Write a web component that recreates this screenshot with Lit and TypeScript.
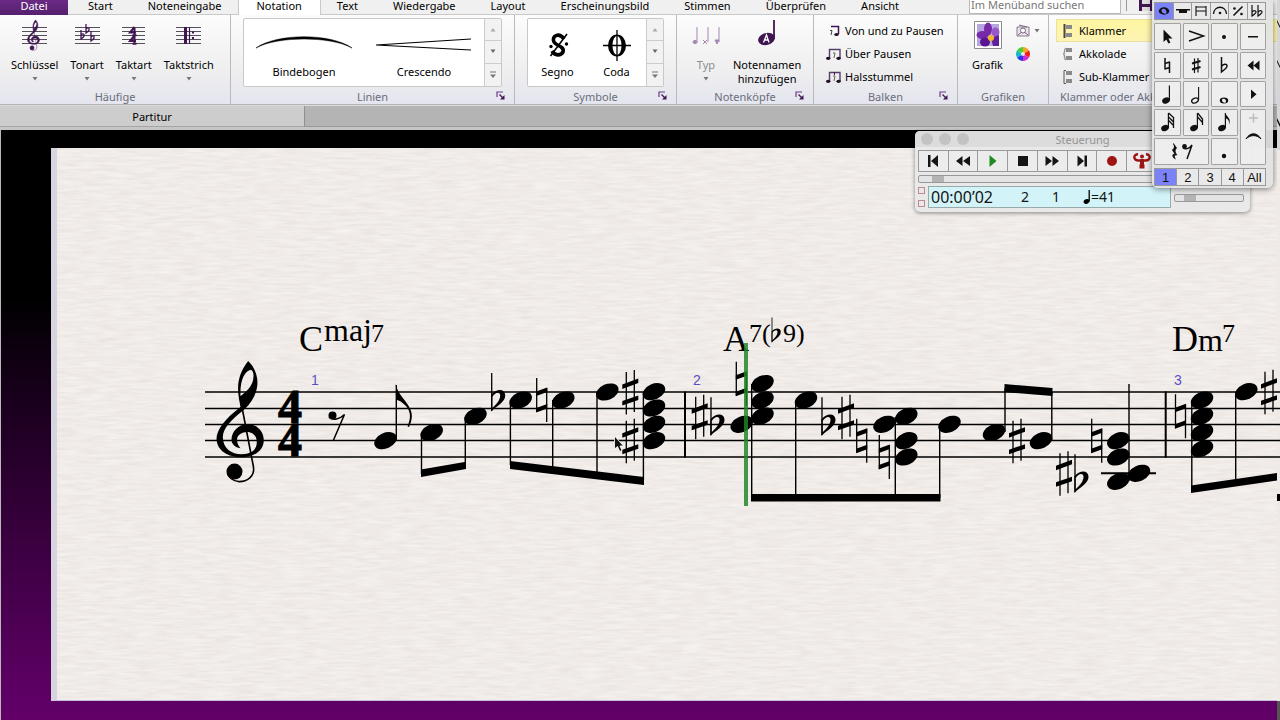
import { LitElement, html, svg, css, TemplateResult } from "lit";
import { customElement, state } from "lit/decorators.js";
import { classMap } from "lit/directives/class-map.js";

const staffLines = (w: number, ys: number[]) =>
  ys.map((y) => svg`<path d="M0 ${y}H${w}" stroke="#55505c" stroke-width="1"/>`);

/* Treble clef drawn in a 142 x 366 box */
const clefShape = svg`
  <path fill-rule="evenodd" d="M95 0C70 33 60 63 67 110L72 138C22 176 0 208 0 235C2 270 35 289 75 289C115 289 142 268 142 238C142 210 120 190 95 189C65 189 45 213 45 236C45 250 55 260 72 262C63 252 61 243 62 233C64 222 75 213 92 213C110 213 121 226 121 244C121 266 105 280 75 280C45 280 19 262 19 228C20 203 40 180 84 145C110 120 123 92 123 64C123 38 110 13 95 0ZM103 26C86 30 70 53 72 106C97 86 110 70 111 48C112 36 109 28 103 26Z"/>
  <path d="M70 105L111 318C116 348 90 363 66 362C50 360 36 350 33 335" fill="none" stroke="currentColor" stroke-width="5"/>
  <circle cx="54" cy="332" r="24"/>`;

const head = (x: number, y: number) =>
  svg`<ellipse cx="${x}" cy="${y}" rx="11.8" ry="7.8" transform="rotate(-24 ${x} ${y})"/>`;
const stem = (x: number, a: number, b: number) =>
  svg`<path d="M${x} ${a}V${b}" stroke="#000" stroke-width="1.4"/>`;
const sharp = (x: number, y: number) => svg`<g transform="translate(${x} ${y})">
  <path d="M-4 -20V22.500M4 -22V20" stroke="#000" stroke-width="1.300"/>
  <path d="M-8 -7.500L8 -13.500V-9L-8 -3ZM-8 9L8 3.500V8L-8 13.500Z"/></g>`;
const flat = (x: number, y: number) => svg`<g transform="translate(${x} ${y})">
  <path d="M0 -27V11" stroke="#000" stroke-width="1.300"/>
  <path fill-rule="evenodd" d="M-.6 -5C4 -11 13 -12 13.500 -5C14 2 5 6 -.6 11.500ZM.6 -3V8C5 4 8.500 0 8.500 -4.500C8.500 -9 3 -8 .6 -3Z"/></g>`;
const natural = (x: number, y: number) => svg`<g transform="translate(${x} ${y})">
  <path d="M-5 -22V12M5 -12V22" stroke="#000" stroke-width="1.300"/>
  <path d="M-5.500 -8.500L5.500 -12.500V-8L-5.500 -4ZM-5.500 8L5.500 4V8.500L-5.500 12.500Z"/></g>`;

const heads: [number, number][] = [
  [385.5, 440.7], [431.7, 432.5], [475.5, 416.3], [520.7, 400], [563.3, 400], [607.3, 392],
  [654, 391.7], [654, 408], [654, 424.3], [654, 440.7],
  [762.5, 383.5], [762.5, 400], [762.5, 416], [741.7, 424.3], [806, 400],
  [884.5, 424.3], [906.3, 416.3], [906.3, 440.7], [906.3, 457], [949.5, 424.3],
  [994, 432.5], [1041, 440.7], [1118.3, 440.7], [1118.3, 457], [1118.3, 481.3], [1139, 473.3],
  [1202, 400], [1202, 416.3], [1202, 432.5], [1202, 448.7], [1246.3, 391.7],
];
const stems: [number, number, number][] = [
  [396.3, 385, 440], [421.5, 433, 474], [465.3, 417, 467], [510.4, 400, 465], [552.7, 400, 468],
  [597, 392, 475], [643.4, 392, 480], [751.7, 384, 498], [795.7, 400, 498], [895.3, 417, 498],
  [939.7, 425, 498], [1005, 388, 432], [1051.8, 392, 440], [1129, 384, 481],
  [1191.8, 400, 490], [1235.7, 392, 480],
];

const scoreDrawing = svg`
  <path d="M205 392H1277M205 408.500H1277M205 424.500H1277M205 440.500H1277M205 457H1277" stroke="#000" stroke-width="1.300"/>
  <path d="M685 391.500V457.500M1165.700 391.500V457.500" stroke="#000" stroke-width="2"/>
  <path d="M1101 473.300H1156" stroke="#000" stroke-width="2"/>
  <g transform="translate(216.500 361) scale(.333)">${clefShape}</g>
  ${heads.map(([x, y]) => head(x, y))}
  ${stems.map(([x, a, b]) => stem(x, a, b))}
  ${[[630.3, 392], [630.3, 440.7], [699.7, 416.7], [846, 416.7], [1017, 440.7], [1064, 473.3], [1269, 391.7]].map(([x, y]) => sharp(x, y))}
  ${[[491.7, 400], [711, 424.3], [822, 424.3], [1075, 481.3]].map(([x, y]) => flat(x, y))}
  ${[[541.7, 400], [741.3, 383.7], [861.7, 440.7], [884.3, 457], [1096.7, 440.7], [1180.5, 416.3]].map(([x, y]) => natural(x, y))}
  <path d="M421 469.500L466 461.700V469L421 477ZM510 461L644 477V485L510 469ZM751 494H940.500V501.500H751ZM1004.500 384L1052.500 388V396L1004.500 392ZM1191 485.500L1277 473V480.500L1191 493Z"/>
  <path d="M395.800 384C398 394 403 397 408 405C414 414 412 420 409 427L407.500 426.500C411 418 411 412 406 406C402 402 399 400 396.800 400Z"/>
  <circle cx="332.500" cy="415.500" r="4"/>
  <path d="M329 417C333 421 340 419 344.500 414.500L333.500 440" fill="none" stroke="#000" stroke-width="1.500"/>`;

const whole = (x = 11, y = 11, s = 1) => svg`<g transform="translate(${x} ${y}) scale(${s})">
  <path fill-rule="evenodd" d="M-5 0A5 3.500 0 1 0 5 0A5 3.500 0 1 0 -5 0ZM-2.400 -.6C-2 -2.800 .8 -2.600 1.800 -.8C3 1.200 2.400 2.800 .8 2.600C-1 2.500 -2.600 1 -2.400 -.6Z"/></g>`;
const smallNote = (x: number, y: number) => svg`
  <ellipse cx="${x}" cy="${y}" rx="4" ry="3" transform="rotate(-25 ${x} ${y})"/>
  <path d="M${x + 3.4} ${y}V${y - 15}" stroke="#111" stroke-width="1.200"/>`;

const keypadIcons: Record<string, unknown> = {
  pointer: svg`<path d="M8.500 5.500V18L11.300 15.400L13.400 19.500L15.400 18.500L13.400 14.500H17.500Z"/>`,
  accent: svg`<path d="M5 7L19.500 12L5 17" fill="none" stroke="#111" stroke-width="1.500"/>`,
  staccato: svg`<circle cx="12" cy="13" r="2"/>`,
  tenuto: svg`<path d="M7 12H17V13.500H7Z"/>`,
  natural: svg`<path d="M10 5V16.500M14.500 8.500V20M10 10.500L14.500 9M10 16L14.500 14.500" fill="none" stroke="#111" stroke-width="1.500"/>`,
  sharp: svg`<path d="M10.500 5.500V20M14 5V19.500" stroke="#111" stroke-width="1.200"/><path d="M8 10.500L16.500 8M8 16.500L16.500 14" stroke="#111" stroke-width="2.200"/>`,
  flat: svg`<path d="M9.500 4V19C13 16.500 15.500 14.500 15 12.500C14.500 10.500 11.500 11 9.500 13.500" fill="none" stroke="#111" stroke-width="1.500"/>`,
  rewind: svg`<path d="M12.500 7.500V17.500L6.500 12.500ZM18.500 7.500V17.500L12.500 12.500Z"/>`,
  quarter: smallNote(11, 18.5),
  half: svg`<ellipse cx="11" cy="18.500" rx="3.500" ry="2.300" transform="rotate(-25 11 18.500)" fill="none" stroke="#111" stroke-width="1.300"/><path d="M14.600 18V5" stroke="#111" stroke-width="1.100"/>`,
  whole: whole(12, 18.5, 0.85),
  play: svg`<path d="M10 7.500V17L15.500 12.200Z"/>`,
  n32: svg`${smallNote(10, 18)}<path d="M13.600 3L19 8M13.600 7L18.500 12M13.600 10.500L18.500 15.500M18.500 7V18" fill="none" stroke="#111" stroke-width="1.300"/>`,
  n16: svg`${smallNote(10, 18)}<path d="M13.600 3L18.500 9V13M13.600 7L18.500 12.500V15" fill="none" stroke="#111" stroke-width="1.300"/>`,
  n8: svg`${smallNote(10, 18)}<path d="M13.400 3C14.500 7 20 8 16.800 15C18 10 15 9 13.400 8Z"/>`,
  dot: svg`<circle cx="12" cy="17" r="2.200"/>`,
};

const groupIcon: Record<string, TemplateResult> = {
  clef: html`<svg width="25" height="34" viewBox="0 0 25 34" aria-hidden="true">${staffLines(25, [9.5, 13.5, 17.5, 21.5, 25.5])}<g class="plum" transform="translate(5.500 2) scale(.084)" stroke="#3f1552" stroke-width="7">${clefShape}</g></svg>`,
  key: html`<svg width="25" height="34" viewBox="0 0 25 34" aria-hidden="true">${staffLines(25, [9.5, 13.5, 17.5, 21.5, 25.5])}<g transform="translate(0 1)" fill="none" stroke="#3f1552" stroke-width="1.300"><path d="M6 11V20C9 18 10 16 8.500 15C7.500 14.500 6.500 15.500 6 16M11 5V14C14 12 15 10 13.500 9C12.500 8.500 11.500 9.500 11 10M16 12V22C19 20 20 18 18.500 17C17.500 16.500 16.500 17.500 16 18"/></g></svg>`,
  time: html`<svg width="23" height="34" viewBox="0 0 23 34" aria-hidden="true">${staffLines(23, [9.5, 13.5, 17.5, 21.5, 25.5])}<path d="M12.500 9L8 14.500H14M12.500 9.500V17.500M12.500 17.500L8 23H14M12.500 18V26M10.500 17.300H14.500M10.500 25.700H14.500" fill="none" stroke="#3f1552" stroke-width="2"/></svg>`,
  bar: html`<svg width="25" height="34" viewBox="0 0 25 34" aria-hidden="true">${staffLines(25, [9.5, 13.5, 17.5, 21.5, 25.5])}<path d="M9.500 9V26" stroke="#3f1552" stroke-width="3"/><path d="M13.500 9V26" stroke="#3f1552" stroke-width="1.200"/><path d="M16 14.500H18M16 20H18" stroke="#3f1552" stroke-width="2"/></svg>`,
};

const arrow = html`<svg class="arrow" width="6" height="4" viewBox="0 0 6 4" aria-hidden="true"><path d="M.5 0H5.500L3 3.500Z" fill="#777"/></svg>`;
const launcher = (name: string) => html`<button class="launcher" aria-label=${name}><svg width="9" height="9" viewBox="0 0 9 9"><path d="M1 6V1H7" fill="none" stroke="#6b3a86" stroke-width="1.200"/><path d="M3.500 3.500L7 7" stroke="#3f1552" stroke-width="1.300"/><path d="M8.500 4V8.500H4Z" fill="#3f1552"/></svg></button>`;
const scroller = html`<div class="scroller">
  <button aria-label="Nach oben"><svg width="8" height="5" viewBox="0 0 8 5"><path d="M4 1L6.500 4.500H1.500Z" fill="#aaa"/></svg></button>
  <button aria-label="Nach unten"><svg width="8" height="5" viewBox="0 0 8 5"><path d="M1.500 .5H6.500L4 4Z" fill="#666"/></svg></button>
  <button aria-label="Alle anzeigen"><svg width="8" height="8" viewBox="0 0 8 8"><path d="M1 .5H7V1.500H1ZM1 3.500H7L4 7Z" fill="#777"/></svg></button></div>`;

const beamIcon = (kind: number) => html`<svg width="16" height="14" viewBox="0 0 16 14" aria-hidden="true">
  ${kind === 0
    ? svg`<path d="M5 2.500H12.500V10" fill="none" stroke="#3f1552" stroke-width="1.500"/><ellipse cx="10.500" cy="10.500" rx="2.200" ry="1.600" fill="#201028"/><path d="M4 6.500H6L5 11" fill="none" stroke="#443" stroke-width="1"/>`
    : svg`<path d="M3.500 11V2.500H14V11" fill="none" stroke="#55406a" stroke-width="1.400"/><ellipse cx="2.200" cy="11.300" rx="2.200" ry="1.600" fill="#201028"/><ellipse cx="12.600" cy="11.300" rx="2.200" ry="1.600" fill="#201028"/><path d="M7 6H9L8 11" fill="none" stroke="#665" stroke-width="1"/>`}
  ${kind === 2 ? svg`<path d="M8.500 2V5" stroke="#3f1552" stroke-width="1"/>` : ""}</svg>`;
const bracketIcon = (kind: number) => html`<svg width="10" height="14" viewBox="0 0 10 14" aria-hidden="true">
  <path d="M3 1H9V5H3ZM3 9H9V13H3Z" fill="#8b8989"/>
  ${kind === 0 ? svg`<path d="M1.500 0V14" stroke="#4a4347" stroke-width="2"/>` : kind === 1 ? svg`<path d="M3 1C0 3 3 5 .5 7C3 9 0 11 3 13" fill="none" stroke="#999" stroke-width="1.500"/>` : svg`<path d="M3 .5H1V13.500H3" fill="none" stroke="#555" stroke-width="1"/>`}</svg>`;

const transport: [string, unknown][] = [
  ["Zum Anfang", svg`<path d="M4 3H6.500V15H4ZM14 3V15L7 9Z"/>`],
  ["Zurückspulen", svg`<path d="M8.500 4V14L2 9ZM16 4V14L9 9Z"/>`],
  ["Wiedergabe", svg`<path d="M5.500 3V15L12.500 9Z" fill="#1f8c1f"/>`],
  ["Stopp", svg`<path d="M4 4H14V14H4Z"/>`],
  ["Vorspulen", svg`<path d="M2.500 4V14L9 9ZM9.500 4V14L16 9Z"/>`],
  ["Zum Ende", svg`<path d="M4.500 3.500V14.500L11 9ZM11.500 3.500H14V14.500H11.500Z"/>`],
  ["Aufnahme", svg`<circle cx="9" cy="9" r="5" fill="#a01414"/>`],
  ["Live-Tempo", svg`<g stroke="#9c1515" fill="none" stroke-width="2.400"><path d="M5 2C-1 3 1 9 6 8.500H12C17 9 19 3 13 2"/><path d="M9 7V14M6.500 14.500H11.500" stroke-width="4"/></g><circle cx="9" cy="4.500" r="2" fill="#9c1515"/>`],
  ["Live-Wiedergabe", svg`<path d="M10 3L5 10H9L7 15" stroke="#889" fill="none" stroke-width="2"/>`],
  ["Dirigieren", svg`<path d="M3 4C3 9 15 9 15 4M9 8V14" stroke="#889" fill="none" stroke-width="2"/>`],
  ["Metronom", svg`<path d="M6 15L8 4H11L13 15" stroke="#889" fill="none" stroke-width="2"/>`],
];

@customElement("score-page")
class ScorePage extends LitElement {
  static styles = css`
    :host { display: block; flex: 1; min-height: 0; overflow: hidden; position: relative; background: linear-gradient(#000 0, #000 28%, #1c0020 48%, #5e0065 96%, #620068 100%); border-left: 1px solid #b9b9b9; }
    .paper { position: absolute; inset: 18px 0 19px 50px; overflow: hidden; background: #f0ebe8; border-left: 6px solid #d5d4df; border-bottom: 1px solid #c4bfdc; }
    .grain { position: absolute; inset: 0; width: 100%; height: 100%; }
    .score { position: absolute; left: -57px; top: -148px; }
    .chord { font-family: "Liberation Serif", serif; font-size: 36px; }
    .chord-mid { font-size: 32px; }
    .chord-ext { font-size: 26px; }
    .sig { font: bold 48px "Liberation Serif", serif; stroke: #000; stroke-width: 1px; }
    .number { font: 14px "Liberation Sans", sans-serif; fill: #5a4fc4; }
  `;
  render() {
    return html`<section class="paper" aria-label="Partitur">
      <svg class="grain" aria-hidden="true">
        <filter id="fibre"><feTurbulence type="fractalNoise" baseFrequency=".05 .42" numOctaves="2" seed="4"/><feColorMatrix values="0 0 0 0 .62  0 0 0 0 .52  0 0 0 0 .5  .8 0 0 0 -.32"/></filter>
        <filter id="light"><feTurbulence type="fractalNoise" baseFrequency=".04 .34" numOctaves="2" seed="9"/><feColorMatrix values="0 0 0 0 .98  0 0 0 0 .97  0 0 0 0 .93  1.6 0 0 0 -.6"/></filter>
        <rect width="100%" height="100%" filter="url(#fibre)" opacity=".5"/><rect width="100%" height="100%" filter="url(#light)" opacity=".6"/>
      </svg>
      <svg class="score" width="1280" height="720" viewBox="0 0 1280 720" role="img" aria-label="Notensystem">
        ${scoreDrawing}
        <text class="sig" x="278" y="423">4</text><text class="sig" x="278" y="456">4</text>
        <text class="chord" x="299" y="351">C</text><text class="chord chord-mid" x="324" y="341">maj</text><text class="chord chord-ext" x="371" y="342">7</text>
        <text class="chord" x="723" y="351">A</text><text class="chord chord-ext" x="749" y="342">7(</text>
        <g transform="translate(772 335) scale(.65)">${flat(0, 0)}</g>
        <text class="chord chord-ext" x="783" y="342">9)</text>
        <text class="chord" x="1172" y="351">D</text><text class="chord chord-mid" x="1198" y="351">m</text><text class="chord chord-ext" x="1222" y="342">7</text>
        <text class="number" x="311" y="385">1</text><text class="number" x="693" y="385">2</text><text class="number" x="1174" y="385">3</text>
        <path d="M744 343H748V506H744Z" fill="#1f8427" opacity=".83"/>
        <path d="M614.500 436V449L617.500 446.500L619.800 451.500L622 450.500L620 446H623.500Z" fill="#111" stroke="#fff" stroke-width=".8"/>
      </svg></section>`;
  }
}

@customElement("transport-panel")
class TransportPanel extends LitElement {
  static styles = css`
    :host { position: absolute; top: 131px; right: 30px; width: 335px; box-sizing: border-box; background: #e9e9e9; border-radius: 5px; box-shadow: 0 1px 4px rgba(0, 0, 0, .45); font-family: "Noto Sans", sans-serif; }
    .title { display: flex; align-items: center; height: 16px; background: #dcdcdc; border-radius: 5px 5px 0 0; color: #949494; font-size: 11px; position: relative; justify-content: center; }
    .lights { position: absolute; left: 6px; display: flex; gap: 6px; }
    .lights i { width: 12px; height: 12px; border-radius: 50%; background: #c3c3c3; }
    .body { padding: 3px 4px 4px 3px; }
    .buttons { display: flex; border: 1px solid #9a9a9a; }
    .buttons button { flex: 1; height: 20px; padding: 0; border: 0; border-right: 1px solid #9a9a9a; background: #ececec; display: grid; place-items: center; }
    .buttons button:last-child { border-right: 0; }
    input { appearance: none; display: block; margin: 0; height: 8px; box-sizing: border-box; border: 1px solid #999; border-radius: 2px; background: #e4e4e4; }
    input::-webkit-slider-thumb { appearance: none; width: 12px; height: 6px; background: #b4b4b4; }
    .position { width: 100%; margin: 3px 0; }
    .lower { display: flex; align-items: center; gap: 3px; }
    .marks { display: flex; flex-direction: column; gap: 6px; width: 7px; }
    .marks i { height: 5px; border: 1px solid #c08a94; }
    .display { flex: 1; display: flex; align-items: center; height: 20px; padding-left: 2px; background: #d2f4f8; border: 1px solid #9aa; font-size: 14px; line-height: 20px; color: #151515; }
    .time { width: 90px; font-size: 16px; }
    .count { width: 31px; }
    .side { padding: 2px 2px 0 0; }
    .volume { width: 70px; }
  `;
  render() {
    return html`<div class="title"><span class="lights"><i></i><i></i><i></i></span>Steuerung</div>
      <div class="body">
        <div class="buttons">${transport.map(([n, d]) => html`<button aria-label=${n}><svg width="18" height="18" viewBox="0 0 18 18" fill="#151515">${d}</svg></button>`)}</div>
        <input class="position" type="range" aria-label="Position" min="0" max="100" value="4">
        <div class="lower"><span class="marks"><i></i><i></i></span>
          <div class="display"><span class="time">00:00’02</span><span class="count">2</span><span class="count">1</span><svg width="8" height="16" viewBox="0 0 8 16"><ellipse cx="3.500" cy="12.500" rx="3" ry="2.300" transform="rotate(-20 3.500 12.500)"/><path d="M6.200 12.500V1" stroke="#000" stroke-width="1.300"/></svg><span>=41</span></div>
          <div class="side"><input class="volume" type="range" aria-label="Lautstärke" min="0" max="100" value="16"></div>
        </div></div>`;
  }
}

@customElement("key-pad")
class KeyPad extends LitElement {
  @state() private voice = "1";
  static styles = css`
    :host { position: absolute; top: 0; right: 7px; width: 121px; box-sizing: border-box; padding: 2px 7px 2px 2px; background: rgba(226, 226, 226, .94); border-radius: 0 0 6px 6px; box-shadow: 0 1px 6px rgba(0, 0, 0, .5); font-family: "Liberation Sans", sans-serif; }
    button { padding: 0; border: 0; background: none; color: #111; font-family: inherit; display: grid; place-items: center; overflow: hidden; }
    .row { display: flex; height: 18px; box-sizing: border-box; border: 1px solid #999; background: #e9e9e9; }
    .row button { flex: 1; border-right: 1px solid #999; font-size: 13px; line-height: 15px; }
    .row button:last-child { border-right: 0; }
    .row .on { background: #7b82f7; }
    .keys { display: grid; grid-template-columns: repeat(4, 1fr); grid-template-rows: repeat(5, 1fr); gap: 2px; height: 142px; margin: 3px 0; }
    .keys button { border: 1px solid #a2a2a2; background: rgba(238, 238, 238, .9); border-radius: 1px; }
    .keys .wide { grid-column: span 2; }
    .keys .tall { grid-row: 4 / span 2; grid-column: 4; }
  `;
  private key(name: string) {
    return html`<button aria-label=${name}><svg width="25" height="25" viewBox="0 0 25 25" fill="#111">${keypadIcons[name]}</svg></button>`;
  }
  render() {
    const tabs = [
      whole(9, 8, 1.05),
      svg`<path d="M2 6H16V7.500H2ZM5 7H13V10H5Z"/>`,
      svg`<path d="M4 4H14M4 8H14M4 3V13M14 3V13" fill="none" stroke="#111" stroke-width="1.100"/>`,
      svg`<path d="M2.500 11C3 2 15 2 15.500 11" fill="none" stroke="#111" stroke-width="1.300"/><circle cx="9" cy="10" r="1.300"/>`,
      svg`<path d="M4.500 12.500L13.500 3.500" stroke="#111" stroke-width="1.600"/><circle cx="5.500" cy="5.500" r="1.300"/><circle cx="12.500" cy="11" r="1.300"/>`,
      svg`<path d="M4 2V13C7 11 9 9 7.500 8C6.500 7.500 5 8 4 9.500M10 2V13C13 11 15 9 13.500 8C12.500 7.500 11 8 10 9.500" fill="none" stroke="#111" stroke-width="1.200"/>`,
    ];
    const names = ["Noten", "Pausen", "Balken", "Artikulation", "Jazz", "Vorzeichen"];
    return html`<div class="row">${tabs.map((t, i) => html`<button class=${classMap({ on: i === 0 })} aria-label=${names[i]}><svg width="18" height="16" viewBox="0 0 18 16" fill="#111">${t}</svg></button>`)}</div>
      <div class="keys">
        ${["pointer", "accent", "staccato", "tenuto", "natural", "sharp", "flat", "rewind", "quarter", "half", "whole", "play", "n32", "n16", "n8"].map((k) => this.key(k))}
        <button class="tall" aria-label="Bogen"><svg width="25" height="54" viewBox="0 0 25 54"><path d="M8 8H17M12.500 3.500V12.500" stroke="#bbb" stroke-width="1.500"/><path d="M5 29C9 22 16 22 20 29C16 24.500 9 24.500 5 29Z" fill="#111" stroke="#111"/></svg></button>
        <button class="wide" aria-label="Pause"><svg width="54" height="25" viewBox="0 0 54 25" fill="#111"><path d="M18.500 4L22 9C20 11 20 12.500 22.500 16.500C19.500 15.500 19 17.500 21 20.500C16.500 18.500 16.500 14.500 19.500 15L17 11C19.500 9 19.500 7 18 5Z"/><circle cx="29.500" cy="7.500" r="2.400"/><path d="M28 9C31 11 35 9 37 6L32 20" fill="none" stroke="#111" stroke-width="1.500"/></svg></button>
        ${this.key("dot")}
      </div>
      <div class="row">${["1", "2", "3", "4", "All"].map((v) => html`<button class=${classMap({ on: this.voice === v })} @click=${() => (this.voice = v)}>${v}</button>`)}</div>`;
  }
}

@customElement("app-root")
class AppRoot extends LitElement {
  @state() private tab = "Notation";
  static styles = css`
    :host { display: flex; flex-direction: column; height: 100vh; overflow: hidden; position: relative; font-family: "Noto Sans", sans-serif; font-size: 11px; color: #000; background: #f0f0f0; }
    button { font: inherit; color: inherit; background: none; border: 0; padding: 0; margin: 0; }
    svg { display: block; }
    .plum { fill: #3f1552; color: #3f1552; }
    .tabs { display: flex; height: 15px; box-sizing: border-box; border-bottom: 1px solid #c9c9c9; background: #f0f0f0; position: relative; }
    .tabs button { height: 15px; line-height: 11px; padding: 0 18px 4px 17px; white-space: nowrap; flex: none; }
    .tabs .file { background: linear-gradient(#6a2a85, #56206e); color: #fff; width: 68px; padding: 0 0 4px; margin-right: 3px; }
    .tabs .on { background: #fff; box-shadow: 1px 0 #c9c9c9, -1px 0 #c9c9c9; }
    .search { width: 152px; height: 14px; box-sizing: border-box; margin: 0 0 0 52px; padding: 0 1px 4px; border: 1px solid #b9b9b9; border-top: 0; background: #fff; font: 11px/10px "Noto Sans", sans-serif; color: #777; }
    .search::placeholder { color: #777; opacity: 1; }
    .tabs .save { margin-left: 5px; border-left: 1px solid #999; padding: 0 0 0 12px; height: 11px; }
    .ribbon { display: flex; height: 90px; box-sizing: border-box; background: linear-gradient(#fcfcfc, #eeeeef 65%, #e4e5ee); border-bottom: 1px solid #b4b4b8; }
    .group { display: flex; flex-direction: column; box-sizing: border-box; border-right: 1px solid #b9b9be; flex: none; white-space: nowrap; }
    .content { display: flex; flex: 1; }
    .caption { display: flex; align-items: center; height: 16px; color: #6a6d7c; justify-content: center; position: relative; }
    .launcher { position: absolute; right: 9px; top: 3px; }
    .common { width: 231px; } .lines { width: 284px; } .symbols { width: 162px; } .heads { width: 137px; }
    .beams { width: 144px; } .graphics { width: 91px; } .brackets { flex: 1; border-right: 0; overflow: hidden; }
    .common .content { padding-left: 11px; gap: 12px; }
    .tool { display: flex; flex-direction: column; align-items: center; padding-top: 3px; }
    .tool .pic { height: 40px; } .tool .text { line-height: 14px; }
    .tool .arrow { margin-top: 5px; }
    .heads .content { gap: 12px; padding-left: 14px; }
    .dim { color: #8d8d8d; }
    .gallery { display: flex; margin: 3px 12px 0 12px; height: 69px; box-sizing: border-box; border: 1px solid #c8c8c8; border-radius: 2px; background: #fff; flex: 1; }
    .gallery .item { flex: 1; display: flex; flex-direction: column; align-items: center; justify-content: space-between; padding: 8px 0 7px; line-height: 14px; }
    .scroller { width: 16px; display: grid; grid-template-rows: 1fr 1fr 1fr; border-left: 1px solid #ccc; background: #f2f2f2; }
    .scroller button { display: grid; place-items: center; border-bottom: 1px solid #ccc; }
    .scroller button:last-child { border: 0; }
    .list { display: flex; flex-direction: column; flex: 1; padding-top: 4px; }
    .list button { display: flex; align-items: center; gap: 3px; height: 23px; text-align: left; padding-left: 12px; }
    .brackets .list { padding-left: 7px; }
    .brackets .list button { padding-left: 7px; gap: 6px; }
    .brackets .list .on { background: linear-gradient(#fff6a0, #fdf3b4); box-shadow: inset 0 0 0 1px #ebe0a0; }
    .brackets .caption { justify-content: flex-start; padding-left: 11px; }
    .graphics .content { padding-left: 14px; gap: 13px; }
    .small { display: flex; flex-direction: column; gap: 10px; padding-top: 9px; }
    .with-arrow { display: flex; align-items: center; gap: 4px; }
    .documents { display: flex; height: 25px; box-sizing: border-box; background: #b4b4b4; border-top: 1px solid #dcdcdc; border-bottom: 3px solid #c6c6c6; }
    .documents button { width: 305px; background: #cdcdcd; border-right: 1px solid #8f8f8f; border-bottom: 1px solid #a5a5a5; }
    .rest { flex: 1; border-bottom: 1px solid #989898; }
    .edge { position: absolute; top: 0; right: 0; bottom: 0; width: 3px; height: 100%; }
  `;
  private tool(icon: string, label: string) {
    return html`<button class="tool"><span class="pic">${groupIcon[icon]}</span><span class="text">${label}</span><span>${arrow}</span></button>`;
  }
  render() {
    const tabs = ["Start", "Noteneingabe", "Notation", "Text", "Wiedergabe", "Layout", "Erscheinungsbild", "Stimmen", "Überprüfen", "Ansicht"];
    return html`
      <nav class="tabs"><button class="file">Datei</button>${tabs.map((t) => html`<button class=${classMap({ on: t === this.tab })} @click=${() => (this.tab = t)}>${t}</button>`)}
        <input class="search" type="search" placeholder="Im Menüband suchen" aria-label="Im Menüband suchen">
        <button class="save" aria-label="Speichern"><svg width="14" height="11" viewBox="0 0 14 11"><path d="M0 0H14V11H0Z" fill="#3f1552"/><path d="M3 0H11V4H3ZM3 7H11V11H3Z" fill="#ddd"/></svg></button></nav>
      <div class="ribbon">
        <section class="group common"><div class="content">${this.tool("clef", "Schlüssel")}${this.tool("key", "Tonart")}${this.tool("time", "Taktart")}${this.tool("bar", "Taktstrich")}</div><div class="caption">Häufige</div></section>
        <section class="group lines"><div class="content"><div class="gallery">
          <button class="item"><svg width="98" height="36" viewBox="0 0 98 36"><path d="M1 21C22 6 76 6 97 21C76 9 22 9 1 21Z" stroke="#000" stroke-width=".5"/></svg>Bindebogen</button>
          <button class="item"><svg width="98" height="36" viewBox="0 0 98 36"><path d="M96 12L1 18L96 23" fill="none" stroke="#000" stroke-width="1.200"/></svg>Crescendo</button>${scroller}</div></div>
          <div class="caption">Linien${launcher("Linien öffnen")}</div></section>
        <section class="group symbols"><div class="content"><div class="gallery">
          <button class="item"><svg width="24" height="36" viewBox="0 0 24 36"><path d="M4.500 29L21 7" stroke="#000" stroke-width="1.600"/><path d="M18 12C13 5 5 9 8 15C10 19 19 19 17 25C14.500 29 9 29 6 24" fill="none" stroke="#000" stroke-width="3.600"/><circle cx="5" cy="19.500" r="1.700"/><circle cx="20.500" cy="17" r="1.700"/></svg>Segno</button>
          <button class="item"><svg width="32" height="36" viewBox="0 0 32 36"><path d="M16 3V34M2 18.500H30" stroke="#000" stroke-width="1.300"/><path fill-rule="evenodd" d="M7 18.500A9 11 0 1 0 25 18.500A9 11 0 1 0 7 18.500ZM11.500 18.500A4.500 9.500 0 1 0 20.500 18.500A4.500 9.500 0 1 0 11.500 18.500Z"/></svg>Coda</button>${scroller}</div></div>
          <div class="caption">Symbole${launcher("Symbole öffnen")}</div></section>
        <section class="group heads"><div class="content">
          <button class="tool dim"><span class="pic"><svg width="30" height="34" viewBox="0 0 30 34"><g fill="#a687b2" stroke="#a687b2"><ellipse cx="4" cy="24" rx="2" ry="1.500"/><path d="M6 24V9M17 24V9M12 22L16 26M16 22L12 26M28 24V9M24 22H28L26 26Z" stroke-width="1"/></g></svg></span><span class="text">Typ</span>${arrow}</button>
          <button class="tool"><span class="pic"><svg width="20" height="34" viewBox="0 0 20 34"><ellipse cx="9.500" cy="21" rx="8.500" ry="6" transform="rotate(-15 9.500 21)" fill="#3f1552"/><path d="M17 21V2" stroke="#3f1552" stroke-width="1.800"/><path d="M6.500 24.500L9.500 17L12 24.500M7.500 22H11" fill="none" stroke="#fff" stroke-width="1.300"/></svg></span><span class="text">Notennamen<br>hinzufügen</span></button></div>
          <div class="caption">Notenköpfe${launcher("Notenköpfe öffnen")}</div></section>
        <section class="group beams"><div class="content list">${["Von und zu Pausen", "Über Pausen", "Halsstummel"].map((t, i) => html`<button>${beamIcon(i)}${t}</button>`)}</div><div class="caption">Balken${launcher("Balken öffnen")}</div></section>
        <section class="group graphics"><div class="content">
          <button class="tool"><span class="pic"><svg width="30" height="32" viewBox="0 0 30 32"><path d="M1.500 3.500H28.500V30.500H1.500Z" fill="#fff" stroke="#8c8c8c"/><path d="M4 6H26V28H4Z" fill="#b9a4e2"/><g fill="#772aa8"><ellipse cx="15" cy="11" rx="4" ry="6.500"/><ellipse cx="22.500" cy="14" rx="4" ry="4.500" fill="#9858cc"/><ellipse cx="9.500" cy="17" rx="6" ry="4"/><ellipse cx="12" cy="24" rx="5" ry="4.500" fill="#5a1590"/><path d="M18 20L26 17V28H20Z" fill="#60209a"/></g><circle cx="18" cy="20" r="3" fill="#f5b52c"/></svg></span><span class="text">Grafik</span></button>
          <div class="small"><button class="with-arrow" aria-label="Kamera"><svg width="14" height="13" viewBox="0 0 14 13"><path d="M1 3H13V12H1Z" fill="#ece5ef" stroke="#8a7b90"/><path d="M3 1L11 3M2 11L7 7L12 11" fill="none" stroke="#76637d"/><circle cx="7" cy="6.500" r="2.500" fill="#fff" stroke="#76637d"/></svg>${arrow}</button>
          <button aria-label="Farbe"><svg width="14" height="14" viewBox="0 0 14 14"><g><path d="M7 7L7 0A7 7 0 0 1 13 3.500Z" fill="#f5a623"/><path d="M7 7L13 3.500A7 7 0 0 1 13 10.500Z" fill="#f02020"/><path d="M7 7L13 10.500A7 7 0 0 1 7 14Z" fill="#d42ad4"/><path d="M7 7L7 14A7 7 0 0 1 1 10.500Z" fill="#2a38e8"/><path d="M7 7L1 10.500A7 7 0 0 1 1 3.500Z" fill="#18b8c8"/><path d="M7 7L1 3.500A7 7 0 0 1 7 0Z" fill="#46d234"/><circle cx="7" cy="7" r="2" fill="#fff" opacity=".8"/></g></svg></button></div></div>
          <div class="caption">Grafiken</div></section>
        <section class="group brackets"><div class="content list">${["Klammer", "Akkolade", "Sub-Klammer"].map((t, i) => html`<button class=${classMap({ on: i === 0 })}>${bracketIcon(i)}${t}</button>`)}</div><div class="caption">Klammer oder Akkolade</div></section>
      </div>
      <div class="documents"><button>Partitur</button><span class="rest"></span></div>
      <score-page></score-page>
      <transport-panel></transport-panel>
      <key-pad></key-pad>
      <svg class="edge" viewBox="0 0 3 720" preserveAspectRatio="none" aria-hidden="true"><path d="M0 0H3V150H0Z" fill="#d6d5d5"/><path d="M0 150H3V701H0Z" fill="#efeae6"/><path d="M0 701H3V720H0Z" fill="#555"/><path d="M0 392H3M0 408.500H3M0 424.500H3M0 440.500H3M0 457H3" stroke="#000" stroke-width="1.300"/><path d="M0 494H3V501H0ZM0 20L3 26V28L0 22ZM0 60L3 66V68L0 62ZM0 118L3 124V127L0 121Z"/></svg>
    `;
  }
}
